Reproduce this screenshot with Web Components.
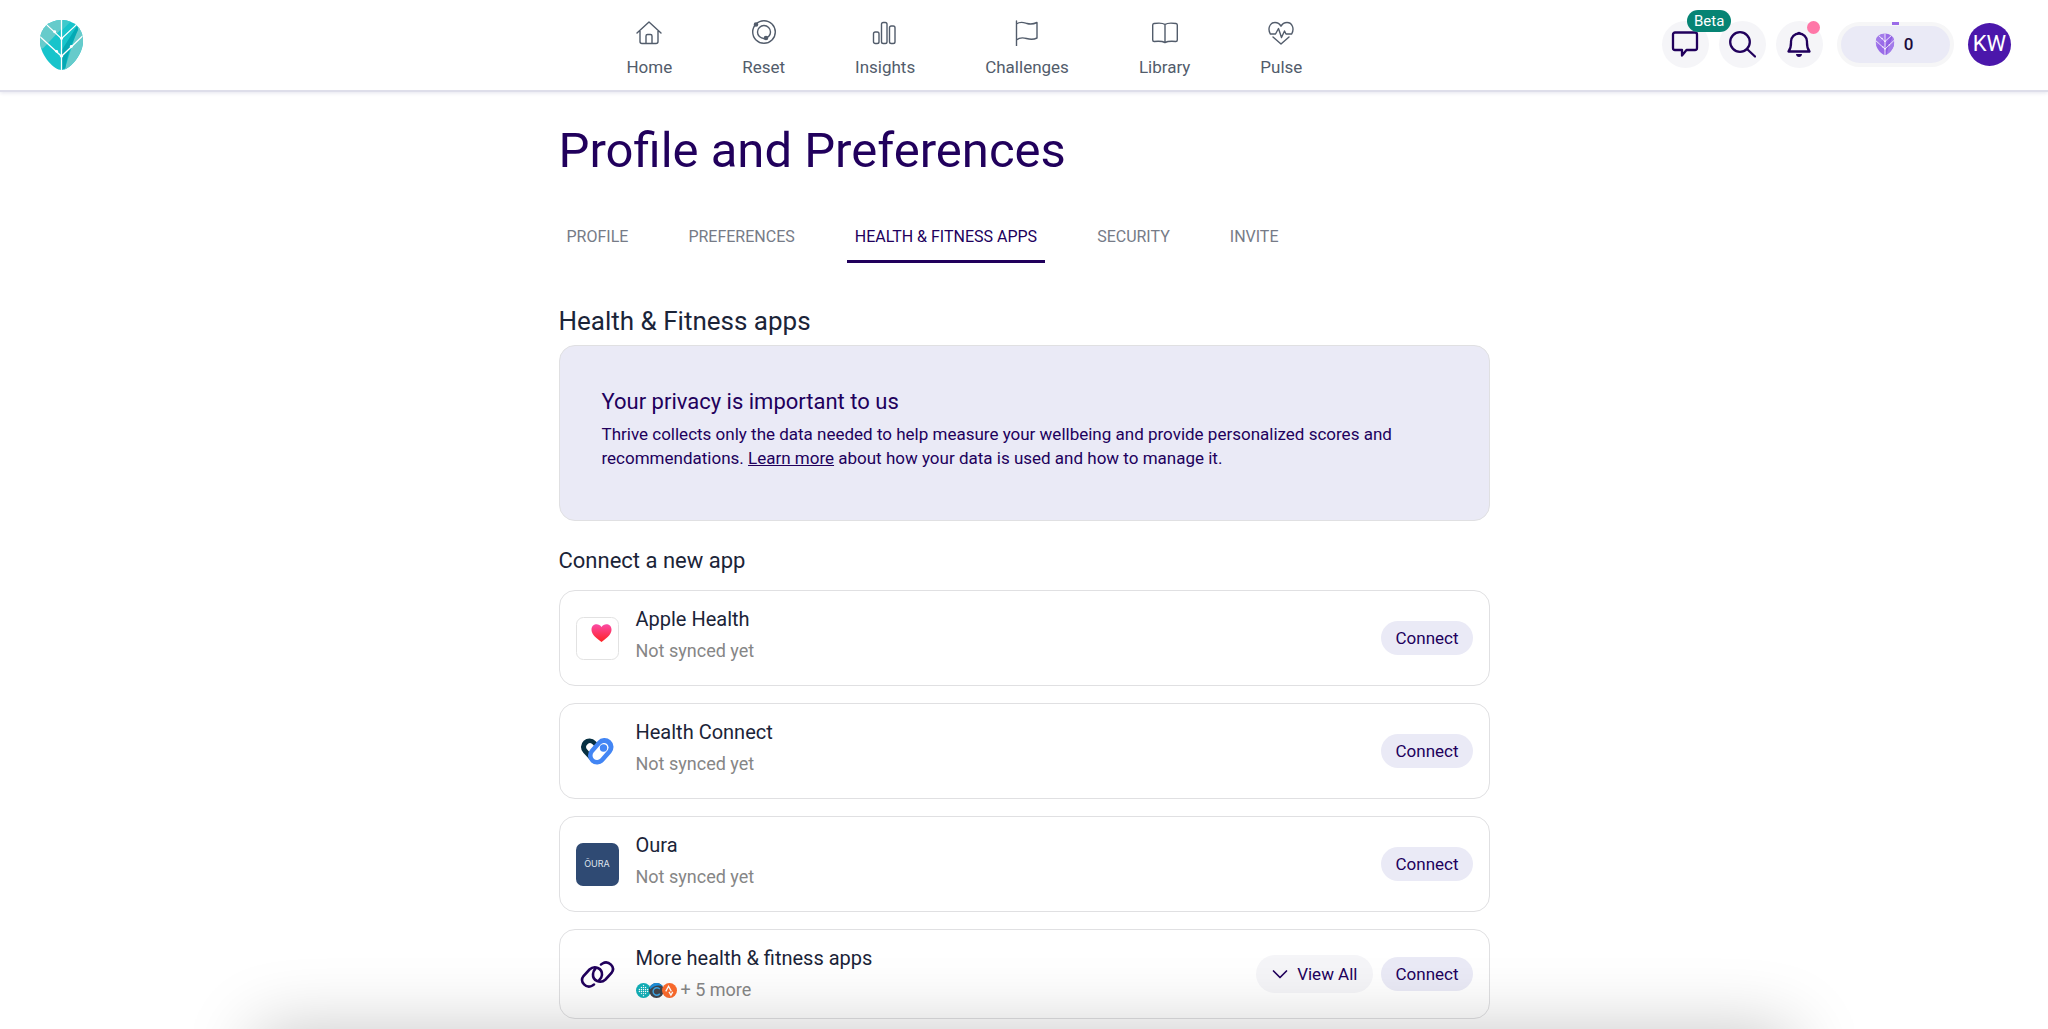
<!DOCTYPE html>
<html lang="en">
<head>
<meta charset="utf-8">
<title>Profile and Preferences</title>
<style>
  html { --ink: #21005c; --text: #1b2438; --muted: #868686; --nav: #525c6b; --lilac: #eaeaf6; --soft: #f5f5f8; --line: #e0e0e2; }
  body { margin: 0; background: #fff; color: var(--text); font-family: Roboto, "Liberation Sans", sans-serif; font-size: 17px; line-height: 24px; }
</style>
</head>
<body>
<thrive-app></thrive-app>

<script>
const leaf = (a, b, c, d, w) => `
  <svg viewBox="0 0 46 52" aria-hidden="true">
    <clipPath id="leaf"><path d="M23 1C36 1 45 10 45 22c0 15-14 30-22 30S1 37 1 22C1 10 10 1 23 1z"/></clipPath>
    <g clip-path="url(#leaf)">
      <path fill="${a}" d="M0 0h46v52H0z"/>
      <path fill="${b}" d="M0 0h23v10L4 30H0zM46 6v46H26L40 8z"/>
      <path fill="${c}" d="M39 7L23 32v20l4-2c2-14 7-26 13-39z"/>
      <path fill="${d}" d="M23 0h12L23 12z"/>
      <path fill="none" stroke="#fff" stroke-width="${w}" d="M23 0v52M8 6l15 14L38 6M0 17l23 21L46 16"/>
      <circle cx="16" cy="13" r="1.500" fill="#fff"/><circle cx="18" cy="33" r="1.500" fill="#fff"/><circle cx="33" cy="28" r="1.500" fill="#fff"/><circle cx="23" cy="20" r="1.500" fill="#fff"/><circle cx="23" cy="38" r="1.500" fill="#fff"/>
    </g>
  </svg>`;

const icons = {
  logo: leaf('#17c4cb', '#66cbcb', '#05a9b4', '#3fc9cc', 1.3),
  leaf: leaf('#9a6be8', '#a37bea', '#8f5fe2', '#9a6be8', 2),
  home: `<svg viewBox="0 0 26 26" class="line"><path d="M1 13L13 2l12 11M4 11v10.500a2 2 0 0 0 2 2h14a2 2 0 0 0 2-2V11M10 23v-7a1.500 1.500 0 0 1 1.500-1.500h3A1.500 1.500 0 0 1 16 16v7"/></svg>`,
  reset: `<svg viewBox="0 0 26 26" class="line"><circle cx="13" cy="12" r="11.300"/><circle cx="13" cy="12" r="6.500"/><circle cx="5" cy="4.500" r="1.600" fill="currentColor"/><circle cx="15" cy="18" r="1.600" fill="currentColor"/></svg>`,
  insights: `<svg viewBox="0 0 26 26" class="line"><rect x="1.500" y="12" width="5.500" height="11.500" rx="1.800"/><rect x="9.500" y="2.500" width="5.500" height="21" rx="1.800"/><rect x="17.500" y="6" width="5.500" height="17.500" rx="1.800"/></svg>`,
  flag: `<svg viewBox="0 0 26 26" class="line"><path d="M2.500 1v25M2.500 4c4-3 7-1.500 10.500-.5s6 .9 10-1V18c-4 2-7 1.500-10.500.5S6 17 2.500 20"/></svg>`,
  library: `<svg viewBox="0 0 26 26" class="line"><path d="M13 4.500c-2-1.500-6-1.700-11-1a1.500 1.500 0 0 0-1.300 1.500v15c0 1 .6 1.500 1.500 1.500 4-.4 8-.4 10.800 1 2.800-1.400 6.800-1.400 10.800-1 .9 0 1.500-.5 1.500-1.500V5A1.500 1.500 0 0 0 24 3.500c-5-.7-9-.5-11 1zM13 4.500v18"/></svg>`,
  pulse: `<svg viewBox="0 0 26 26" class="line"><path d="M2.300 14C-.5 9 1.500 2.500 7 2.500c3 0 4.800 1.500 6 3.700 1.200-2.200 3-3.700 6-3.700 5.500 0 7.500 6.500 4.700 11.500M2.300 14h5.200l3-5.500 3 9 3-6.500 1.500 3h5.700M5 17l8 7 8-7"/></svg>`,
  chat: `<svg viewBox="0 0 28 28" class="bold"><path d="M4 2.500h20a2 2 0 0 1 2 2V18a2 2 0 0 1-2 2H15.500L11 25.500V20H4a2 2 0 0 1-2-2V4.500a2 2 0 0 1 2-2z"/></svg>`,
  search: `<svg viewBox="0 0 28 28" class="bold"><circle cx="12" cy="12" r="9.800"/><path d="M19 19l8 7.500"/></svg>`,
  bell: `<svg viewBox="0 0 28 28" class="bold"><path d="M3.500 21.500C6.500 17.500 6 14 6 11.500a8 8 0 0 1 16 0c0 2.500-.5 6 2.500 10z"/><path fill="currentColor" stroke="none" d="M12 4c0-3 4-3 4 0zM11 24h6c0 4-6 4-6 0z"/></svg>`,
  chevron: `<svg viewBox="0 0 16 16" class="bold thin"><path d="M1.500 5L8 11.500 14.500 5"/></svg>`,
  apple: `<svg viewBox="0 0 43 43"><defs><linearGradient id="h" x2="0" y2="1"><stop stop-color="#fb4aa5"/><stop offset="1" stop-color="#ff2222"/></linearGradient></defs><rect x=".5" y=".5" width="42" height="42" rx="7" fill="#fff" stroke="#e2e2e2"/><path fill="url(#h)" d="M25.500 25C18 19.500 15.500 16.500 15.500 12.500c0-5.500 7-7 10-2.500 3-4.500 10-3 10 2.500 0 4-2.500 7-10 12.500z"/></svg>`,
  healthconnect: `<svg viewBox="0 0 43 43" fill="none" stroke-linecap="round"><path stroke="#073042" stroke-width="17" d="M13.500 17l7.500 8"/><path stroke="#fff" stroke-width="7.500" d="M14 17l7 8"/><path stroke="#4285f4" stroke-width="18" d="M28.500 17l-7.500 8.500"/><path stroke="#fff" stroke-width="9" d="M28 17.500l-7 8"/><circle cx="27.500" cy="18" r="3.700" fill="#4285f4"/></svg>`,
  oura: `<svg viewBox="0 0 43 43"><rect width="43" height="43" rx="7" fill="#2f4a73"/><text x="21" y="24" text-anchor="middle" font-family="Inter, sans-serif" font-size="9" fill="#dfe5ee">ŌURA</text></svg>`,
  chain: `<svg viewBox="0 0 43 43" fill="none" stroke="#21005c" stroke-width="2.600" stroke-linecap="round"><path d="M18 31.500l-1.500 1c-6 3.500-13.500-3.500-9-9.500l6-6.500c5-4.500 13-1.500 12.500 5.500-.2 2.500-1.500 4-3 5.500"/><path d="M25 11.500l1.500-1c6-3.500 13.500 3.500 9 9.500l-6 6.500c-5 4.500-13 1.500-12.500-5.500.2-2.500 1-4 2.500-5.500"/></svg>`,
  fitbit: `<svg viewBox="0 0 16 16"><circle cx="8" cy="8" r="8" fill="#12b0b8"/><g stroke="#fff" stroke-width="1.500" stroke-linecap="round" stroke-dasharray="0 2.200"><path d="M8 2.500V14M5.800 4.700v7M10.200 4.700v7M3.600 6.900v3M12.400 6.900v3"/></g></svg>`,
  garmin: `<svg viewBox="0 0 16 16"><circle cx="8" cy="8" r="8" fill="#41454c"/><path fill="#1e8fdb" d="M1 4a8 8 0 0 1 14 0C11 2 6 2 1 7z"/><path d="M11.500 6.500a4 4 0 1 0 0 5" fill="none" stroke="#3fa9e8" stroke-width="1.500"/></svg>`,
  strava: `<svg viewBox="0 0 16 16"><circle cx="8" cy="8" r="8" fill="#fc6b2d"/><path d="M4 9l3-5.500L10 9M7.500 9.500L9.500 13l2-3.500" fill="none" stroke="#fff" stroke-width="1.400"/></svg>`
};

class Base extends HTMLElement {
  connectedCallback() {
    if (this.shadowRoot) return;
    this.attachShadow({ mode: 'open' }).innerHTML =
      `<style>*{box-sizing:border-box}svg{display:block;width:100%;height:100%}button,a{font:inherit;color:inherit}h1,h2,h3,p{margin:0;font-weight:400}${this.css()}</style>${this.html()}`;
  }
  css() { return ''; }
  html() { return ''; }
}

customElements.define('thrive-icon', class extends Base {
  css() { return `:host{display:block;flex:none;width:var(--size,26px);height:var(--size,26px)}
    .line{fill:none;stroke:currentColor;stroke-width:1.400;stroke-linejoin:round;stroke-linecap:round}
    .bold{fill:none;stroke:currentColor;stroke-width:2.300;stroke-linejoin:round;stroke-linecap:round}
    .thin{stroke-width:1.700}`; }
  html() { return icons[this.getAttribute('name')]; }
});

customElements.define('nav-item', class extends Base {
  css() { return `:host{display:block}
    a{display:flex;flex-direction:column;align-items:center;gap:9px;color:var(--nav);text-decoration:none}`; }
  html() { return `<a href="#"><thrive-icon name="${this.getAttribute('icon')}"></thrive-icon><slot></slot></a>`; }
});

customElements.define('round-button', class extends Base {
  css() { return `:host{display:block;position:relative}
    :host([badge]){z-index:1}
    button{display:grid;place-items:center;width:47px;height:47px;padding:0;border:0;border-radius:50%;background:var(--soft);color:var(--ink);--size:28px}
    .badge{position:absolute;left:25px;top:-11px;height:22px;padding:0 7px;border-radius:11px;background:#068474;color:#fff;font-size:15px;line-height:22px}
    .dot{position:absolute;right:3px;top:0;width:13px;height:13px;border-radius:50%;background:#ff77a8}`; }
  html() {
    const badge = this.getAttribute('badge');
    return `<button aria-label="${this.getAttribute('label')}"><thrive-icon name="${this.getAttribute('icon')}"></thrive-icon></button>
      ${badge ? `<span class="badge">${badge}</span>` : ''}${this.hasAttribute('dot') ? '<span class="dot"></span>' : ''}`;
  }
});

customElements.define('points-pill', class extends Base {
  css() { return `:host{display:block;position:relative;margin:0 4px}
    button{display:flex;align-items:center;justify-content:center;gap:8px;width:117px;height:45px;padding:0 4px 0 0;border:4px solid #f6f6f7;border-radius:23px;background:var(--lilac);color:#1c0b3a;font-weight:500;--size:22px}
    i{position:absolute;left:55px;top:0;width:7px;height:3px;background:#9a6be8}`; }
  html() { return `<button><thrive-icon name="leaf"></thrive-icon><slot></slot></button><i></i>`; }
});

customElements.define('thrive-header', class extends Base {
  css() { return `:host{display:block}
    header{display:grid;grid-template-columns:auto 3fr auto 2fr auto;align-items:center;height:92px;padding:0 37px 2px 36px;border-bottom:2px solid #dedeea;box-shadow:0 1px 4px #e4e4ee}
    .logo{--size:51px}
    nav{grid-column:3;display:flex;gap:70px;padding-top:10px}
    .actions{grid-column:5;display:flex;align-items:center;gap:10px}
    .avatar{width:43px;height:43px;padding:0;border:0;border-radius:50%;background:#4b17ab;color:#fff;font-size:22px}`; }
  html() { return `<header>
    <a class="logo" href="#" aria-label="Thrive"><thrive-icon name="logo"></thrive-icon></a>
    <nav>
      <nav-item icon="home">Home</nav-item><nav-item icon="reset">Reset</nav-item><nav-item icon="insights">Insights</nav-item>
      <nav-item icon="flag">Challenges</nav-item><nav-item icon="library">Library</nav-item><nav-item icon="pulse">Pulse</nav-item>
    </nav>
    <div class="actions">
      <round-button icon="chat" label="Chat" badge="Beta"></round-button>
      <round-button icon="search" label="Search"></round-button>
      <round-button icon="bell" label="Notifications" dot></round-button>
      <points-pill>0</points-pill>
      <button class="avatar">KW</button>
    </div></header>`; }
});

customElements.define('profile-tabs', class extends Base {
  css() { return `:host{display:block}
    nav{display:flex;gap:44px}
    a{padding:1px 8px 11px;border-bottom:3px solid transparent;color:#767b87;font-size:16px;text-decoration:none}
    a[aria-current]{color:var(--ink);border-color:var(--ink)}`; }
  html() { return `<nav><a href="#">PROFILE</a><a href="#">PREFERENCES</a><a href="#" aria-current="page">HEALTH &amp; FITNESS APPS</a><a href="#">SECURITY</a><a href="#">INVITE</a></nav>`; }
});

customElements.define('privacy-note', class extends Base {
  css() { return `:host{display:block;padding:42px 42px 50px;border:1px solid var(--line);border-radius:16px;background:var(--lilac);color:var(--ink)}
    h3{font-size:22px;line-height:28px;margin-bottom:6px}`; }
  html() { return `<h3>Your privacy is important to us</h3><p><slot></slot></p>`; }
});

customElements.define('pill-button', class extends Base {
  css() { return `:host{display:block}
    button{display:flex;align-items:center;gap:9px;height:34px;padding:0 14px;border:0;border-radius:17px;background:var(--lilac);color:var(--ink);--size:16px}
    :host([soft]) button{height:38px;padding:0 16px;border-radius:19px;background:var(--soft)}`; }
  html() { return `<button>${this.hasAttribute('soft') ? '<thrive-icon name="chevron"></thrive-icon>' : ''}<slot></slot></button>`; }
});

customElements.define('app-row', class extends Base {
  css() { return `:host{display:flex;align-items:center;gap:17px;min-height:96px;padding:14px 16px;border:1px solid var(--line);border-radius:16px}
    :host([compact]){min-height:90px;padding:14px 16px}
    thrive-icon{--size:43px}
    .info{flex:1;align-self:flex-start}
    h3{font-size:20px;line-height:28px}
    .sub{display:flex;align-items:center;gap:4px;margin-top:4px;font-size:18px;line-height:28px;color:var(--muted)}
    .actions{display:flex;align-items:center;gap:8px}`; }
  html() { return `<thrive-icon name="${this.getAttribute('icon')}"></thrive-icon>
    <div class="info"><h3>${this.getAttribute('name')}</h3><div class="sub"><slot>Not synced yet</slot></div></div>
    <div class="actions"><slot name="action"></slot><pill-button>Connect</pill-button></div>`; }
});

customElements.define('icon-stack', class extends Base {
  css() { return `:host{display:flex}thrive-icon{--size:15px}thrive-icon+thrive-icon{margin-left:-2px}`; }
  html() { return `<thrive-icon name="fitbit"></thrive-icon><thrive-icon name="garmin"></thrive-icon><thrive-icon name="strava"></thrive-icon>`; }
});

customElements.define('bottom-shade', class extends Base {
  css() { return `:host{display:block;position:fixed;left:12.5%;right:12.5%;top:100%;height:100px;box-shadow:0 0 70px rgba(0,0,0,.22);pointer-events:none}`; }
});

customElements.define('thrive-app', class extends Base {
  css() { return `:host{display:block}
    main{display:flex;flex-direction:column;width:100%;max-width:931px;margin:0 auto;padding-top:25px}
    h1{font-size:49px;line-height:68px;color:var(--ink);margin-bottom:39px}
    h2{font-size:26px;line-height:32px;margin:42px 0 8px}
    h3{font-size:22px;line-height:28px;margin:26px 0 15px}
    .rows{display:flex;flex-direction:column;gap:17px}`; }
  html() { return `<thrive-header></thrive-header>
    <main>
      <h1>Profile and Preferences</h1>
      <profile-tabs></profile-tabs>
      <h2>Health &amp; Fitness apps</h2>
      <privacy-note>Thrive collects only the data needed to help measure your wellbeing and provide personalized scores and recommendations. <a href="#">Learn more</a> about how your data is used and how to manage it.</privacy-note>
      <h3>Connect a new app</h3>
      <div class="rows">
        <app-row icon="apple" name="Apple Health"></app-row>
        <app-row icon="healthconnect" name="Health Connect"></app-row>
        <app-row icon="oura" name="Oura"></app-row>
        <app-row compact icon="chain" name="More health &amp; fitness apps"><icon-stack></icon-stack><span>+ 5 more</span><pill-button soft slot="action">View All</pill-button></app-row>
      </div>
    </main>
    <bottom-shade></bottom-shade>`; }
});
</script>
</body>
</html>
